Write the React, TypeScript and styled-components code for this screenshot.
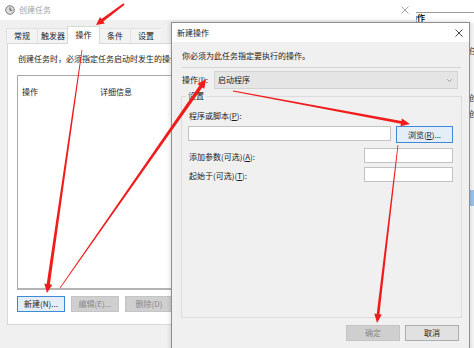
import React from "react";
import styled, { createGlobalStyle, css } from "styled-components";

const GlobalStyle = createGlobalStyle`
  *, *::before, *::after { box-sizing: border-box; }
  html, body { margin: 0; padding: 0; }
  body {
    width: 474px;
    height: 348px;
    overflow: hidden;
    background: #f0f0f0;
    color: #1a1a1a;
    font-family: "Noto Sans CJK SC", "Noto Sans", sans-serif;
    font-size: 8px;
    line-height: 12px;
  }
`;

type Variant = "default" | "focused" | "disabled";

interface Arrow {
  from: [number, number];
  to: [number, number];
  tail: number;
  body: number;
  head: number;
  len: number;
}

const arrows: Arrow[] = [
  { from: [124, 4], to: [96, 25], tail: 2, body: 3, head: 8, len: 8 },
  { from: [82, 50], to: [47, 293], tail: 0.8, body: 3.2, head: 8, len: 9 },
  { from: [60, 288], to: [206, 79], tail: 0.8, body: 3.5, head: 8.5, len: 9 },
  { from: [233, 91], to: [410, 124], tail: 0.8, body: 3, head: 8, len: 9 },
  { from: [398, 145], to: [377, 323], tail: 0.8, body: 2.8, head: 7.5, len: 9 },
];

// tapered annotation arrow: thin tail, thicker shaft, filled head
const arrowPoints = (a: Arrow) => {
  const [x1, y1] = a.from;
  const [x2, y2] = a.to;
  const l = Math.hypot(x2 - x1, y2 - y1);
  const dx = (x2 - x1) / l;
  const dy = (y2 - y1) / l;
  const nx = -dy;
  const ny = dx;
  const bx = x2 - dx * a.len;
  const by = y2 - dy * a.len;
  const pts = [
    [x1 + (nx * a.tail) / 2, y1 + (ny * a.tail) / 2],
    [bx + (nx * a.body) / 2, by + (ny * a.body) / 2],
    [bx + (nx * a.head) / 2, by + (ny * a.head) / 2],
    [x2, y2],
    [bx - (nx * a.head) / 2, by - (ny * a.head) / 2],
    [bx - (nx * a.body) / 2, by - (ny * a.body) / 2],
    [x1 - (nx * a.tail) / 2, y1 - (ny * a.tail) / 2],
  ];
  return pts.map((p) => p.map((v) => v.toFixed(1)).join(",")).join(" ");
};

const ClockIcon = () => (
  <svg width="10" height="10" viewBox="0 0 10 10">
    <circle cx="5" cy="5" r="4.3" fill="#dcdcdc" stroke="#7c7c7c" strokeWidth="1" />
    <path d="M5 2.4V5.2H7.2" fill="none" stroke="#555" strokeWidth="1" />
  </svg>
);

const CloseIcon: React.FC<{ color: string }> = ({ color }) => (
  <svg width="8" height="8" viewBox="0 0 8 8">
    <path d="M0.5 0.5L7.5 7.5M7.5 0.5L0.5 7.5" stroke={color} strokeWidth="0.9" />
  </svg>
);

const Chevron = () => (
  <svg width="5" height="3" viewBox="0 0 5 3">
    <path d="M0.3 0.3L2.5 2.5L4.7 0.3" fill="none" stroke="#8a8a8a" strokeWidth="0.8" />
  </svg>
);

const App: React.FC = () => {
  const tabs = ["常规", "触发器", "操作", "条件", "设置"];

  return (
    <>
      <GlobalStyle />
      <Desktop>
        <BackWindow>
          <BackTop />
          <BackHeader>操作</BackHeader>
          <BackPane>
            <BackItem $gap={22}>任务计划程序库</BackItem>
            <BackItem $gap={35}>创建基本任务...</BackItem>
            <BackItem $gap={4}>创建任务...</BackItem>
            <BackSelected />
          </BackPane>
        </BackWindow>

        <MainWindow>
          <TitleBar>
            <ClockIcon />
            <TitleText $dim>创建任务</TitleText>
            <CloseBox>
              <CloseIcon color="#9a9a9a" />
            </CloseBox>
          </TitleBar>
          <MainBody>
            <TabStrip>
              {tabs.map((t) => (
                <Tab key={t} $selected={t === "操作"}>
                  {t}
                </Tab>
              ))}
            </TabStrip>
            <TabPanel>
              <Hint>创建任务时，必须指定任务启动时发生的操作。</Hint>
              <ActionList>
                <ListHeader>
                  <HeaderCell>操作</HeaderCell>
                  <HeaderCell>详细信息</HeaderCell>
                </ListHeader>
              </ActionList>
              <ButtonRow>
                <Button $variant="focused" $width={48}>
                  新建(N)...
                </Button>
                <Button $variant="disabled" $width={48}>
                  编辑(E)...
                </Button>
                <Button $variant="disabled" $width={48}>
                  删除(D)
                </Button>
              </ButtonRow>
            </TabPanel>
          </MainBody>
        </MainWindow>

        <Dialog>
          <DialogTitle>
            <TitleText>新建操作</TitleText>
            <CloseBox>
              <CloseIcon color="#333" />
            </CloseBox>
          </DialogTitle>
          <DialogBody>
            <Hint>你必须为此任务指定要执行的操作。</Hint>
            <Separator />
            <ComboRow>
              <span>
                操作(<u>I</u>):
              </span>
              <Combo>
                <span>启动程序</span>
                <Chevron />
              </Combo>
            </ComboRow>
            <Group>
              <GroupLabel>设置</GroupLabel>
              <FieldLabel>
                程序或脚本(<u>P</u>):
              </FieldLabel>
              <PathRow>
                <TextBox />
                <Button $variant="focused" $width={57} $height={17}>
                  浏览(<u>R</u>)...
                </Button>
              </PathRow>
              <FieldRow $gap={5}>
                <span>
                  添加参数(可选)(<u>A</u>):
                </span>
                <TextBox />
              </FieldRow>
              <FieldRow $gap={4}>
                <span>
                  起始于(可选)(<u>T</u>):
                </span>
                <TextBox />
              </FieldRow>
            </Group>
            <DialogButtons>
              <Button $variant="disabled" $width={54}>
                确定
              </Button>
              <Button $variant="default" $width={54}>
                取消
              </Button>
            </DialogButtons>
          </DialogBody>
        </Dialog>

        <Annotations width="474" height="348" viewBox="0 0 474 348">
          {arrows.map((a, i) => (
            <polygon key={i} points={arrowPoints(a)} fill="#f01c1c" />
          ))}
        </Annotations>
      </Desktop>
    </>
  );
};

const Desktop = styled.div`
  position: relative;
  width: 474px;
  height: 348px;
  overflow: hidden;
  background: #f0f0f0;
`;

/* ---- window behind, on the right ---- */

const BackWindow = styled.section`
  position: absolute;
  left: 400px;
  top: 0;
  width: 80px;
  height: 348px;
  z-index: 1;
  display: flex;
  flex-direction: column;
  background: #f7f7f7;
`;

const BackTop = styled.div`
  height: 13px;
  flex: none;
  background: #fff;
  border-bottom: 1px solid #9a9a9a;
`;

const BackHeader = styled.div`
  height: 10px;
  flex: none;
  padding-left: 9px;
  line-height: 10px;
  font-weight: bold;
  background: #fff;
`;

const BackPane = styled.div`
  display: flex;
  flex-direction: column;
  padding-left: 69px;
`;

const BackItem = styled.div<{ $gap: number }>`
  margin-top: ${(p) => p.$gap}px;
  white-space: nowrap;
  color: #333;
`;

const BackSelected = styled.div`
  margin: 70px 0 0 -2px;
  height: 16px;
  background: #9cc3e8;
`;

/* ---- main window ---- */

const MainWindow = styled.section`
  position: absolute;
  left: 0;
  top: 0;
  width: 416px;
  height: 348px;
  z-index: 2;
  display: flex;
  flex-direction: column;
  background: #f0f0f0;
`;

const TitleBar = styled.header`
  height: 20px;
  flex: none;
  display: flex;
  align-items: center;
  gap: 4px;
  padding: 0 7px 0 5px;
  background: #fff;
`;

const TitleText = styled.span<{ $dim?: boolean }>`
  color: ${(p) => (p.$dim ? "#a3a3a3" : "#1a1a1a")};
`;

const CloseBox = styled.span`
  margin-left: auto;
  display: flex;
`;

const MainBody = styled.div`
  flex: 1;
  display: flex;
  flex-direction: column;
  padding: 6px 7px 23px 7px;
`;

const TabStrip = styled.div`
  height: 17px;
  flex: none;
  display: flex;
  align-items: flex-end;
  margin-left: -1px;
`;

const Tab = styled.div<{ $selected?: boolean }>`
  width: 31px;
  display: flex;
  justify-content: center;
  white-space: nowrap;
  ${(p) =>
    p.$selected
      ? css`
          height: 18px;
          margin: 0 -1px -1px;
          width: 33px;
          padding-top: 2px;
          background: #fff;
          border: 1px solid #d9d9d9;
          border-bottom: none;
          position: relative;
          z-index: 1;
        `
      : css`
          height: 15px;
          padding-top: 1px;
          background: #f3f3f3;
          border: 1px solid #e2e2e2;
          border-bottom: none;
          border-right: none;
        `}
`;

const TabPanel = styled.div`
  flex: 1;
  display: flex;
  flex-direction: column;
  padding: 9px 0 12px 10px;
  background: #fff;
  border: 1px solid #d9d9d9;
`;

const Hint = styled.div`
  white-space: nowrap;
`;

const ActionList = styled.div`
  flex: 1;
  margin: 10px 0 6px -1px;
  border: 1px solid #a9a9a9;
  border-bottom: 2px solid #b4b4b4;
  background: #fff;
`;

const ListHeader = styled.div`
  display: grid;
  grid-template-columns: 78px 1fr;
  padding: 10px 0 0 4px;
`;

const HeaderCell = styled.span`
  color: #222;
`;

const ButtonRow = styled.div`
  display: flex;
  gap: 6px;
  margin-left: -1px;
`;

const Button = styled.div<{ $variant: Variant; $width: number; $height?: number }>`
  width: ${(p) => p.$width}px;
  height: ${(p) => p.$height ?? 16}px;
  flex: none;
  display: flex;
  align-items: center;
  justify-content: center;
  white-space: nowrap;
  ${(p) =>
    p.$variant === "focused"
      ? css`
          background: #e3eef9;
          border: 1px solid #3d8ad6;
          color: #1a1a1a;
        `
      : p.$variant === "disabled"
      ? css`
          background: #cfcfcf;
          border: 1px solid #c4c4c4;
          color: #8a8a8a;
        `
      : css`
          background: #e1e1e1;
          border: 1px solid #adadad;
          color: #1a1a1a;
        `}
`;

/* ---- new action dialog ---- */

const Dialog = styled.section`
  position: absolute;
  left: 171px;
  top: 22px;
  width: 299px;
  height: 330px;
  z-index: 3;
  display: flex;
  flex-direction: column;
  background: #f0f0f0;
  border: 1px solid #8e8e8e;
  box-shadow: 0 0 5px rgba(0, 0, 0, 0.18);
`;

const DialogTitle = styled.header`
  height: 19px;
  flex: none;
  display: flex;
  align-items: center;
  padding: 0 6px 0 5px;
  background: #fff;
`;

const DialogBody = styled.div`
  display: flex;
  flex-direction: column;
  padding: 8px 8px 0 10px;
`;

const Separator = styled.div`
  height: 1px;
  margin-top: 5px;
  background: #d5d5d5;
`;

const ComboRow = styled.div`
  display: grid;
  grid-template-columns: 32px 1fr;
  align-items: center;
  margin: 3px 3px 0 0;
`;

const Combo = styled.div`
  height: 18px;
  display: flex;
  align-items: center;
  justify-content: space-between;
  padding: 0 5px 0 3px;
  background: #e5e5e5;
  border: 1px solid #d2d2d2;
`;

const Group = styled.div`
  height: 222px;
  flex: none;
  display: flex;
  flex-direction: column;
  margin: 7px -1px 0 -1px;
  padding: 0 8px 0 7px;
  border: 1px solid #dcdcdc;
`;

const GroupLabel = styled.span`
  align-self: flex-start;
  margin: -7px 0 0 -3px;
  padding: 0 2px;
  background: #f0f0f0;
`;

const FieldLabel = styled.div`
  margin-top: 8px;
`;

const PathRow = styled.div`
  display: flex;
  align-items: flex-start;
  gap: 5px;
  margin: 4px 0 0 -1px;
`;

const TextBox = styled.div`
  flex: 1;
  height: 15px;
  background: #fff;
  border: 1px solid #c3c3c3;
`;

const FieldRow = styled.div<{ $gap: number }>`
  display: grid;
  grid-template-columns: 1fr 89px;
  align-items: center;
  margin-top: ${(p) => p.$gap}px;

  & > span {
    padding-top: 3px;
  }
`;

const DialogButtons = styled.div`
  display: flex;
  justify-content: flex-end;
  gap: 5px;
  margin: 7px 2px 0 0;
`;

const Annotations = styled.svg`
  position: absolute;
  left: 0;
  top: 0;
  z-index: 10;
  pointer-events: none;
`;

export default App;
